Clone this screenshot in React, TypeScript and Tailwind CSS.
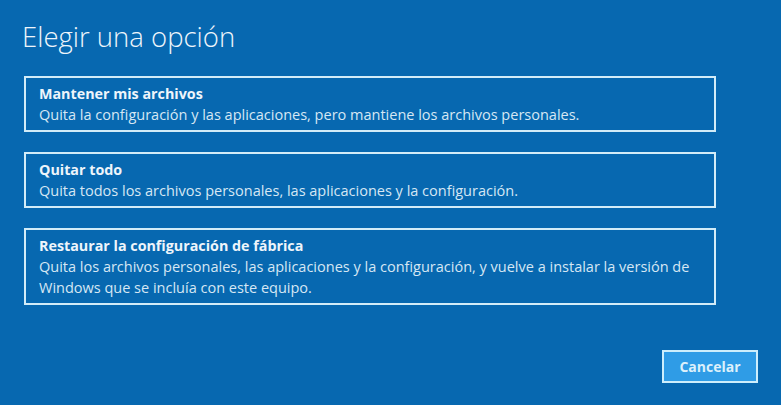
const options = [
  {
    title: 'Mantener mis archivos',
    desc: 'Quita la configuración y las aplicaciones, pero mantiene los archivos personales.',
  },
  {
    title: 'Quitar todo',
    desc: 'Quita todos los archivos personales, las aplicaciones y la configuración.',
  },
  {
    title: 'Restaurar la configuración de fábrica',
    desc: 'Quita los archivos personales, las aplicaciones y la configuración, y vuelve a instalar la versión de Windows que se incluía con este equipo.',
  },
];

export default function App() {
  return (
    <div
      className="w-[781px] h-[405px] bg-[#0768b0] flex flex-col overflow-hidden"
      style={{ fontFamily: '"Open Sans", "Noto Sans", sans-serif' }}
    >
      <h1 className="pl-[22px] pt-[20px] text-[27.5px] leading-[34px] font-light text-[#eef5fb]">
        Elegir una opción
      </h1>
      <div className="flex flex-col gap-[20px] mt-[22px] ml-[24px] w-[692px]">
        {options.map((o) => (
          <button
            key={o.title}
            className="border-2 border-[#d2ecf8] text-left px-[13px] pt-[5px] pb-[5px]"
          >
            <div className="text-[14.3px] leading-[21px] font-bold text-[#eef5fb]">{o.title}</div>
            <div className="text-[14.5px] leading-[21px] text-[#d6e7f4]">{o.desc}</div>
          </button>
        ))}
      </div>
      <div className="flex justify-end mt-auto mb-[22px] mr-[23px]">
        <button className="w-[96px] h-[33px] bg-[#2f9ce6] border-2 border-[#cdeefc] text-[14px] font-bold text-[#dcf0fb]">
          Cancelar
        </button>
      </div>
    </div>
  );
}
